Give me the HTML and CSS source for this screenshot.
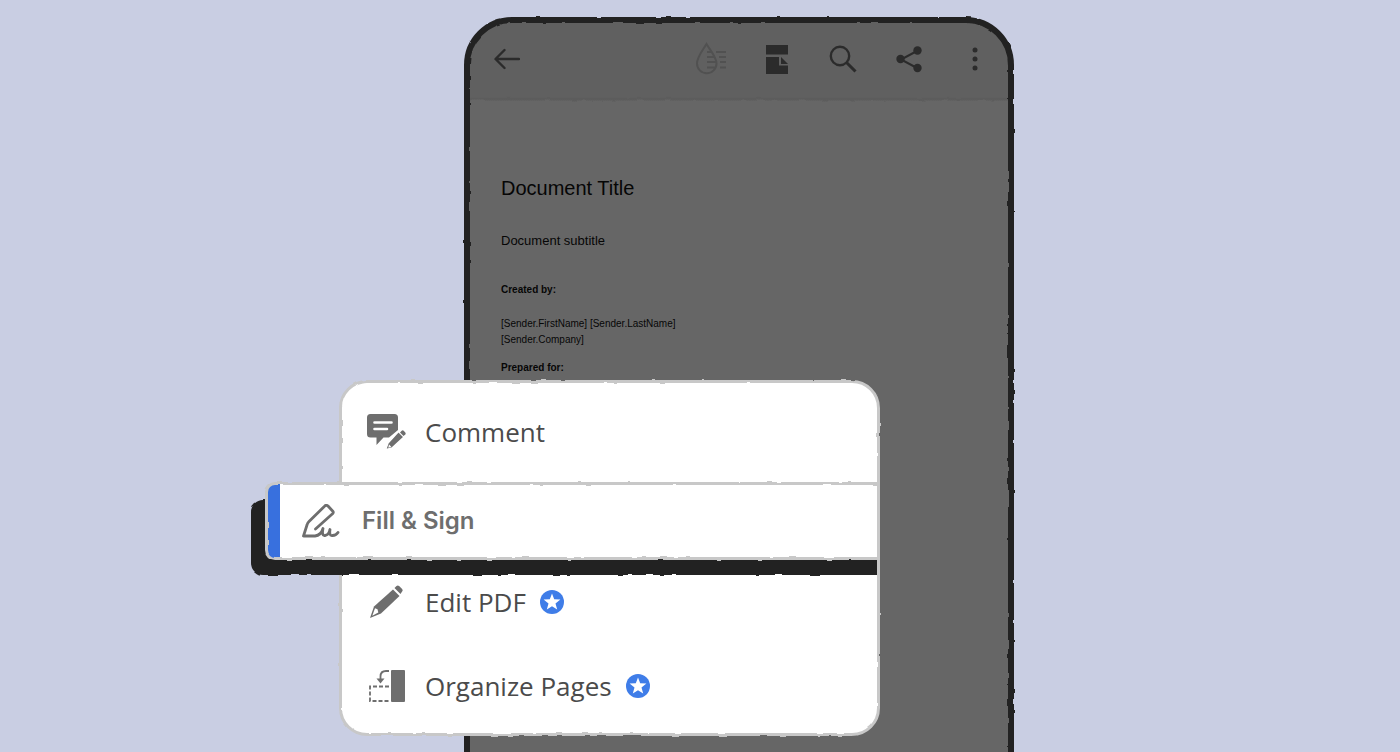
FILE: index.html
```html
<!DOCTYPE html>
<html lang="en">
<head>
<meta charset="utf-8">
<meta name="viewport" content="width=device-width, initial-scale=1">
<title>Document tools</title>
<link rel="stylesheet" href="styles.css">
</head>
<body>
<svg class="defs" width="0" height="0" aria-hidden="true">
  <filter id="rough" x="-5%" y="-5%" width="110%" height="110%">
    <feTurbulence type="fractalNoise" baseFrequency="0.1" numOctaves="1" seed="4" result="n"/>
    <feGaussianBlur in="SourceGraphic" stdDeviation="0.5"/>
    <feDisplacementMap in2="n" scale="3" xChannelSelector="R" yChannelSelector="G"/>
    <feGaussianBlur stdDeviation="0.4"/>
  </filter>
  <symbol id="star" viewBox="0 0 24 24">
    <circle cx="12" cy="12" r="12" fill="#3f7de8"/>
    <path fill="#fff" d="M12 3.400l2.200 5.900 6.200.3-4.900 3.900 1.700 6.100L12 16.200l-5.200 3.400 1.700-6.100L3.600 9.600l6.200-.3z"/>
  </symbol>
</svg>
<main class="scene">
  <section class="phone">
    <div class="screen">
      <header class="toolbar">
        <button class="tool back" aria-label="Back">
          <svg width="26" height="22" viewBox="0 0 26 22" fill="none" stroke="currentColor" stroke-width="2.400" stroke-linecap="round" stroke-linejoin="round"><path d="M25 11H2M10.500 2L1.500 11l9 9"/></svg>
        </button>
        <button class="tool faint" aria-label="Liquid mode">
          <svg width="32" height="34" viewBox="0 0 32 34" fill="none" stroke="currentColor" stroke-width="2"><path d="M11.500 2C8 8 2 15 2 21.500a9.700 9.700 0 0 0 19.500 0C21.500 15 15 8 11.500 2zM12 10h4M12 15h7M12 20h9M12 25.500h8M21 10h10M24 15h7M25 20h6M25 25.500h6"/></svg>
        </button>
        <button class="tool" aria-label="View mode">
          <svg width="22" height="29" viewBox="0 0 22 29" fill="currentColor"><path d="M0 0h22v9.500H0zM0 12h13v8.500h9V29H0z"/><path d="M15 12l7 7h-7z"/></svg>
        </button>
        <button class="tool" aria-label="Search">
          <svg width="28" height="28" viewBox="0 0 28 28" fill="none" stroke="currentColor"><circle cx="11" cy="11" r="9.200" stroke-width="2.400"/><path d="M17.500 17.500l9 9" stroke-width="3"/></svg>
        </button>
        <button class="tool" aria-label="Share">
          <svg width="26" height="27" viewBox="0 0 26 27" fill="currentColor"><path d="M21 5L5 13.500 21 22" fill="none" stroke="currentColor" stroke-width="2"/><circle cx="21.500" cy="4.500" r="4.200"/><circle cx="4.500" cy="13" r="4.200"/><circle cx="21.500" cy="22" r="4.200"/></svg>
        </button>
        <button class="tool" aria-label="More options">
          <svg width="6" height="24" viewBox="0 0 6 24" fill="currentColor"><circle cx="3" cy="3" r="2.500"/><circle cx="3" cy="12" r="2.500"/><circle cx="3" cy="21" r="2.500"/></svg>
        </button>
      </header>
      <article class="document">
        <h1 class="title">Document Title</h1>
        <p class="subtitle">Document subtitle</p>
        <h2 class="label">Created by:</h2>
        <p class="sender">[Sender.FirstName] [Sender.LastName]<br>[Sender.Company]</p>
        <h2 class="label">Prepared for:</h2>
      </article>
    </div>
    <nav class="menu" aria-label="Tools">
      <button class="item comment">
        <svg class="icon" width="40" height="36" viewBox="0 0 40 36" fill="#6e6e6e"><path d="M3.500 0h24A3.500 3.500 0 0 1 31 3.500V16L22 23.500h-5.500L9.500 31v-7.500h-6A3.500 3.500 0 0 1 0 20V3.500A3.500 3.500 0 0 1 3.500 0z"/><path d="M7.500 8.500h17M7.500 15h12.500" stroke="#fff" stroke-width="2.600" stroke-linecap="round"/><path d="M31.500 17.500l5.500 5.500-12 11-6.500 1.800L21 29z" stroke="#fff" stroke-width="1.500"/><path d="M33 18.500l1.700-1.700a1.500 1.500 0 0 1 2 0l1.600 1.600a1.500 1.500 0 0 1 0 2L36.500 22z"/><path d="M22 30.500l2.300 2.300-3 1z" fill="#fff"/></svg>
        <span>Comment</span>
      </button>
      <button class="item active">
        <span class="face"></span>
        <svg class="icon" width="38" height="34" viewBox="0 0 38 34" fill="none" stroke="#6e6e6e" stroke-width="2.800" stroke-linecap="round" stroke-linejoin="round"><path d="M13.500 25L30.800 9.500a1.800 1.800 0 0 0 0-2.300L26 2a2.200 2.200 0 0 0-3.200 0L7 17.500Q5.500 19 5 21L1.500 32H13C17.500 31.500 20 28 21 24.500 20 29 20.500 32 23 31.500 26 31 27.500 28 28 25.500 27.500 29 27.500 32 30.500 31.500 33.500 31.500 35 30 36 28.500"/></svg>
        <span>Fill &amp; Sign</span>
      </button>
      <button class="item">
        <svg class="icon" width="40" height="34" viewBox="0 0 40 34" fill="#6e6e6e"><path d="M26 4.500l6.500 6.500L14 28.500 3 33 7 21.500z"/><path d="M27.500 3l2-2a2 2 0 0 1 2.600 0l3 3a2 2 0 0 1 0 2.600L33.500 9z"/><path d="M8 23.200l2.500 1 .8 3.300-6 3.200z" fill="#fff"/></svg>
        <span>Edit PDF</span>
        <svg class="badge" width="24" height="24"><use href="#star"/></svg>
      </button>
      <button class="item">
        <svg class="icon" width="40" height="34" viewBox="0 0 40 34" fill="none" stroke="#6e6e6e" stroke-width="1.800"><rect x="24" y="1" width="14" height="32" rx="1" fill="#6e6e6e" stroke="none"/><path d="M22 17.500H3V32h19" stroke-dasharray="4 2"/><path d="M22 2h-3q-5.500 0-5.500 5.500V11"/><path d="M9.500 9.500h8l-4 5z" fill="#6e6e6e" stroke="none"/></svg>
        <span>Organize Pages</span>
        <svg class="badge" width="24" height="24"><use href="#star"/></svg>
      </button>
    </nav>
  </section>
</main>
</body>
</html>
```
FILE: styles.css
```css
* { box-sizing: border-box; }

body {
  margin: 0;
  background: #c9cee3;
  font-family: "Liberation Sans", Arial, sans-serif;
}

button {
  border: 0;
  padding: 0;
  background: none;
  color: inherit;
  cursor: pointer;
}

svg { display: block; flex: none; }

.defs { position: absolute; }

.scene {
  display: flex;
  justify-content: center;
  min-height: 100vh;
  padding: 17px 0 0 78px;
  overflow: hidden;
}

.phone {
  position: relative;
  display: flex;
  width: 550px;
  isolation: isolate;
}

.phone::before {
  content: "";
  position: absolute;
  inset: 0 0 -60px;
  z-index: -1;
  border: 6px solid #222;
  border-radius: 48px;
  background: linear-gradient(#616161 74px, #5b5b5b 75px, #5d5d5d 77px, #666 78px);
  filter: url(#rough);
}

.screen { flex: 1; padding: 6px; }

.toolbar {
  display: flex;
  align-items: center;
  height: 72px;
  color: #2b2b2b;
}

.tool {
  display: flex;
  justify-content: center;
  width: 66px;
}

.back {
  justify-content: flex-start;
  margin-right: auto;
  padding-left: 24px;
}

.faint { color: #515151; }

.document { padding: 79px 31px 0; color: #060606; }

.title {
  margin: 0;
  font-size: 20px;
  line-height: 28px;
  font-weight: 400;
}

.subtitle { margin: 30px 0 0; font-size: 13px; line-height: 18px; }

.label { margin: 32px 0 0; font-size: 10px; line-height: 16px; }

.sender { margin: 18px 0 0; font-size: 10px; line-height: 16px; }

.sender + .label { margin-top: 12px; }

.menu {
  position: absolute;
  top: 363px;
  left: -125px;
  display: flex;
  flex-direction: column;
  width: 541px;
  padding-bottom: 8px;
  color: #4b4b4b;
  isolation: isolate;
}

.menu::before {
  content: "";
  position: absolute;
  inset: 0;
  z-index: -1;
  border: 3px solid #c8c8c8;
  border-radius: 28px;
  background: #fff;
  filter: url(#rough);
}

.item {
  display: flex;
  align-items: center;
  gap: 18px;
  height: 84px;
  padding-left: 28px;
  font-family: "Open Sans", "Noto Sans", sans-serif;
  font-size: 26px;
  line-height: 36px;
  text-align: left;
}

.comment { height: 102px; padding-top: 2px; }

.active {
  position: relative;
  height: 78px;
  margin: 0 3px 0 -74px;
  padding-left: 37px;
  gap: 22px;
  color: #6e6e6e;
  font-family: Inter, sans-serif;
  font-size: 24px;
  font-weight: 600;
  isolation: isolate;
  clip-path: inset(-4px 0 -20px -20px);
}

.active::before,
.active::after {
  content: "";
  position: absolute;
  filter: url(#rough);
}

.active::before {
  inset: 18px -6px -15px -14px;
  z-index: -2;
  border-radius: 12px 0 0 12px;
  background: #222;
}

.face {
  position: absolute;
  inset: 1px 0 1px 1px;
  z-index: -1;
  border-radius: 10px 0 0 10px;
  background: linear-gradient(90deg, #3870de 14px, #fff 14px);
}

.active::after {
  inset: 0 -6px 0 0;
  border: solid #c8c8c8;
  border-width: 3px 0 3px 3px;
  border-radius: 10px 0 0 10px;
}

.badge { margin-left: -4px; }
```
